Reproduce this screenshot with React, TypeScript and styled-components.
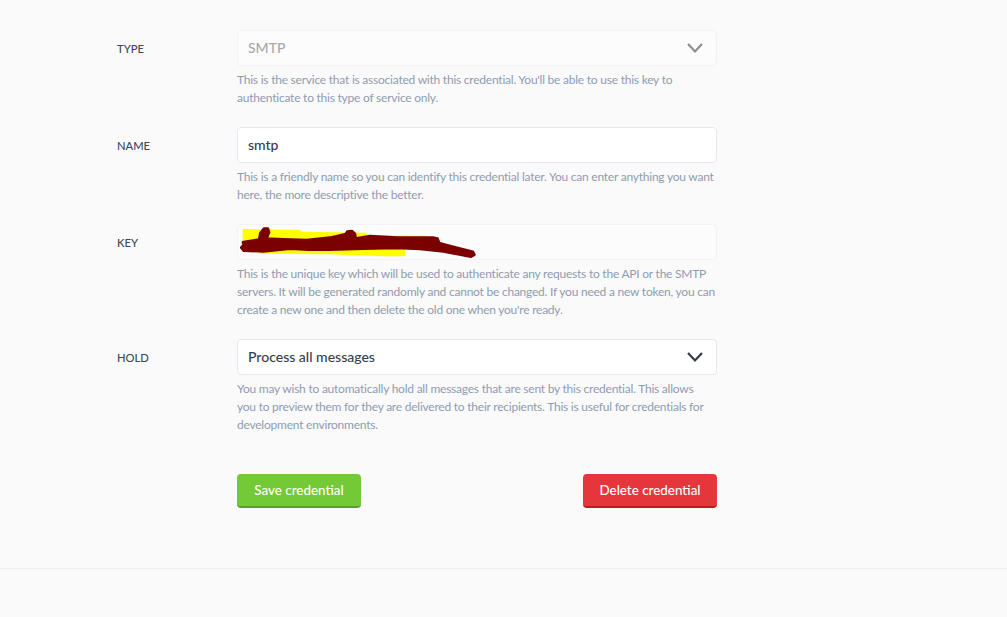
import React from "react";
import styled, { createGlobalStyle } from "styled-components";

const Global = createGlobalStyle`
  html, body {
    margin: 0;
    padding: 0;
    background: #fafafa;
    font-family: Lato, "Noto Sans", sans-serif;
  }
`;

const Page = styled.div`
  width: 1007px;
  height: 617px;
  overflow: hidden;
  box-sizing: border-box;
  padding: 30px 0 0 117px;
`;

const Form = styled.form`
  width: 600px;
  display: flex;
  flex-direction: column;
  gap: 20px;
`;

const Row = styled.div`
  display: grid;
  grid-template-columns: 120px 480px;
`;

const Label = styled.label`
  font-size: 11.2px;
  font-weight: 500;
  line-height: 37px;
  color: #3c4858;
  text-transform: uppercase;
`;

const Control = styled.div<{ $disabled?: boolean }>`
  position: relative;
  box-sizing: border-box;
  height: 36px;
  padding: 0 10px;
  display: flex;
  align-items: center;
  justify-content: space-between;
  border: 1px solid ${(p) => (p.$disabled ? "#f2f3f5" : "#e4e8ef")};
  border-radius: 4px;
  background: ${(p) => (p.$disabled ? "#fcfcfc" : "#fff")};
  color: ${(p) => (p.$disabled ? "#a8a8a8" : "#343f4d")};
  font-size: 14px;
  font-weight: 500;
  line-height: 34px;
`;

const Chevron = styled.svg<{ $disabled?: boolean }>`
  width: 18px;
  height: 12px;
  margin-right: 2px;
  fill: none;
  stroke: ${(p) => (p.$disabled ? "#8d8d8d" : "#343b45")};
  stroke-width: 2.2;
`;

const Help = styled.p`
  margin: 5px 0 0;
  font-size: 12px;
  line-height: 18px;
  letter-spacing: -0.23px;
  color: #8f9cb0;
`;

const Scribble = styled.svg`
  position: absolute;
  left: -8px;
  top: -10px;
  width: 260px;
  height: 55px;
`;

const Actions = styled.div`
  margin: 20px 0 0 120px;
  width: 480px;
  display: flex;
  justify-content: space-between;
`;

const Button = styled.button<{ $bg: string; $edge: string; $width: number }>`
  width: ${(p) => p.$width}px;
  height: 34px;
  padding: 0;
  border: 0;
  border-bottom: 2px solid ${(p) => p.$edge};
  border-radius: 4px;
  background: ${(p) => p.$bg};
  color: #fff;
  font-family: inherit;
  font-size: 13.4px;
  font-weight: 500;
`;

const Rule = styled.hr`
  margin: 60px 0 0 -117px;
  width: 1007px;
  border: 0;
  border-top: 1px solid #eeeeee;
`;

const DownIcon = ({ disabled }: { disabled?: boolean }) => (
  <Chevron $disabled={disabled} viewBox="0 0 18 12">
    <path d="M2 2 L9 9.5 L16 2" />
  </Chevron>
);

const App: React.FC = () => {
  return (
    <Page>
      <Global />
      <Form>
        <Row>
          <Label>Type</Label>
          <div>
            <Control $disabled>
              SMTP
              <DownIcon disabled />
            </Control>
            <Help>
              This is the service that is associated with this credential. You'll be able to use this key to
              <br />
              authenticate to this type of service only.
            </Help>
          </div>
        </Row>
        <Row>
          <Label>Name</Label>
          <div>
            <Control>smtp</Control>
            <Help>
              This is a friendly name so you can identify this credential later. You can enter anything you want
              <br />
              here, the more descriptive the better.
            </Help>
          </div>
        </Row>
        <Row>
          <Label>Key</Label>
          <div>
            <Control $disabled>
              <Scribble viewBox="0 0 780 165">
                <path
                  d="M38 42 L210 44 L215 50 L410 53 L412 60 L590 62 L590 100 L525 100 L525 124 L460 124 L300 118 L90 116 L85 110 L38 110 Z"
                  fill="#ffff00"
                />
                <path
                  d="M40 82 L88 75 L92 55 L102 42 L113 42 L116 52 L108 72 L160 74 L230 76 L300 69 L348 58 L352 51 L365 49 L374 57 L376 72 L420 64 L500 69 L608 69 L622 72 L627 85 L660 94 L728 111 L732 119 L723 124 L640 108 L570 101 L500 98 L400 100 L300 103 L235 103 L180 100 L100 108 L42 106 L35 98 L42 90 Z"
                  fill="#7b0000"
                  stroke="#7b0000"
                  strokeWidth="10"
                  strokeLinejoin="round"
                />
              </Scribble>
            </Control>
            <Help>
              This is the unique key which will be used to authenticate any requests to the API or the SMTP
              <br />
              servers. It will be generated randomly and cannot be changed. If you need a new token, you can
              <br />
              create a new one and then delete the old one when you're ready.
            </Help>
          </div>
        </Row>
        <Row>
          <Label>Hold</Label>
          <div>
            <Control>
              Process all messages
              <DownIcon />
            </Control>
            <Help>
              You may wish to automatically hold all messages that are sent by this credential. This allows
              <br />
              you to preview them for they are delivered to their recipients. This is useful for credentials for
              <br />
              development environments.
            </Help>
          </div>
        </Row>
        <Actions>
          <Button type="button" $bg="#74c936" $edge="#5a9f26" $width={124}>
            Save credential
          </Button>
          <Button type="button" $bg="#e5363b" $edge="#b81c20" $width={134}>
            Delete credential
          </Button>
        </Actions>
      </Form>
      <Rule />
    </Page>
  );
};

export default App;
